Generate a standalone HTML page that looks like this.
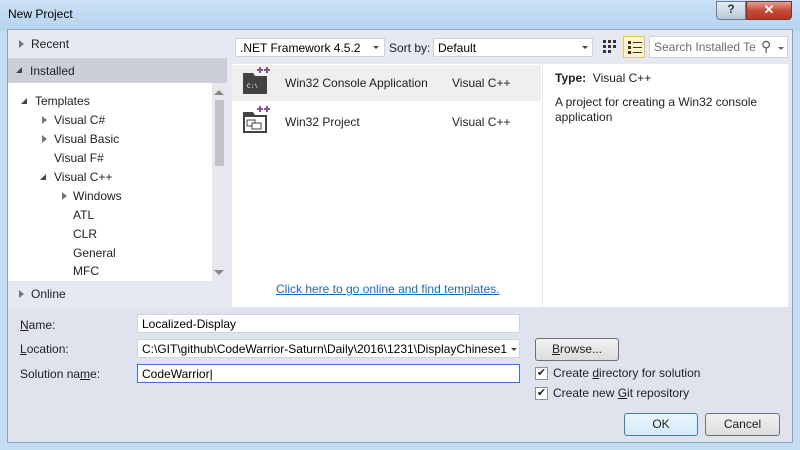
<!DOCTYPE html>
<html><head><style>
*{margin:0;padding:0;box-sizing:border-box}
body{width:800px;height:450px;overflow:hidden;background:#c4dcf2;font-family:"Liberation Sans",sans-serif;font-size:12px;color:#1e1e1e;position:relative}
.a{position:absolute}
.title{left:0;top:0;width:800px;height:30px;background:linear-gradient(#c9e0f6,#b8d4ef)}
.u{text-decoration:underline}
.tri{position:absolute;width:0;height:0}
.tr{border-left:5px solid #777;border-top:4px solid transparent;border-bottom:4px solid transparent}
.td{border-right:6px solid #444;border-top:6px solid transparent}
.inp{background:#fff;border:1px solid #d0d3dc;height:19px;padding:2px 4px;white-space:nowrap;overflow:hidden}
.btn{border:1px solid #707070;border-radius:3px;background:linear-gradient(#f2f2f2,#dcdcdc);text-align:center;line-height:20px}
.cb{width:13px;height:13px;border:1px solid #8e8f8f;background:#fff;font-size:11px;line-height:11px;text-align:center}
</style></head><body>
<div class="a title"></div>
<div class="a" style="left:8px;top:7px;font-size:12px;color:#000">New Project</div>
<div class="a" style="left:716px;top:1px;width:30px;height:19px;border:1px solid #6d7b8c;border-radius:0 0 0 4px;background:linear-gradient(#e4ecf5,#b8c8d9);text-align:center;font-size:12px;font-weight:bold;color:#333">?</div>
<div class="a" style="left:746px;top:1px;width:46px;height:19px;border:1px solid #6d3a34;border-radius:0 0 4px 0;background:linear-gradient(#e5a095,#c44a38 50%,#b83522);text-align:center;font-size:13px;font-weight:bold;color:#fff">✕</div>
<div class="a" style="left:7px;top:29px;width:786px;height:414px;background:#e6e8f2;border:1px solid #8aa3bd"></div>
<!-- left -->
<div class="a tri tr" style="left:19px;top:40px"></div>
<div class="a" style="left:31px;top:37px">Recent</div>
<div class="a" style="left:8px;top:58px;width:219px;height:25px;background:#ccced8"></div>
<div class="a tri td" style="left:16px;top:67px"></div>
<div class="a" style="left:30px;top:64px">Installed</div>
<div class="a" style="left:8px;top:83px;width:219px;height:198px;background:#fff"></div>
<div class="a" style="left:212px;top:83px;width:15px;height:198px;background:#e8e8ec"></div>
<div class="a" style="left:215px;top:100px;width:9px;height:66px;background:#c2c3c9"></div>
<div class="a tri" style="left:214px;top:90px;border-bottom:5px solid #888;border-left:5px solid transparent;border-right:5px solid transparent"></div>
<div class="a tri" style="left:214px;top:270px;border-top:5px solid #888;border-left:5px solid transparent;border-right:5px solid transparent"></div>
<div class="a tri td" style="left:21px;top:98px"></div>
<div class="a" style="left:35px;top:94px">Templates</div>
<div class="a tri tr" style="left:42px;top:116px"></div>
<div class="a" style="left:54px;top:113px">Visual C#</div>
<div class="a tri tr" style="left:42px;top:135px"></div>
<div class="a" style="left:54px;top:132px">Visual Basic</div>
<div class="a" style="left:54px;top:151px">Visual F#</div>
<div class="a tri td" style="left:40px;top:174px"></div>
<div class="a" style="left:54px;top:170px">Visual C++</div>
<div class="a tri tr" style="left:62px;top:192px"></div>
<div class="a" style="left:73px;top:189px">Windows</div>
<div class="a" style="left:73px;top:208px">ATL</div>
<div class="a" style="left:73px;top:227px">CLR</div>
<div class="a" style="left:73px;top:246px">General</div>
<div class="a" style="left:73px;top:264px;height:11px;overflow:hidden">MFC</div>
<div class="a tri tr" style="left:19px;top:290px"></div>
<div class="a" style="left:31px;top:287px">Online</div>
<!-- toolbar -->
<div class="a inp" style="left:235px;top:38px;width:150px;color:#000">.NET Framework 4.5.2</div>
<div class="a tri" style="left:373px;top:46px;border-top:3px solid #444;border-left:3px solid transparent;border-right:3px solid transparent"></div>
<div class="a" style="left:389px;top:41px">Sort by:</div>
<div class="a inp" style="left:433px;top:38px;width:160px;color:#000">Default</div>
<div class="a tri" style="left:582px;top:46px;border-top:3px solid #444;border-left:3px solid transparent;border-right:3px solid transparent"></div>
<svg class="a" style="left:602px;top:39px" width="16" height="16"><g fill="#333"><rect x="1" y="1" width="3" height="3"/><rect x="6" y="1" width="3" height="3"/><rect x="11" y="1" width="3" height="3"/><rect x="1" y="6" width="3" height="3"/><rect x="6" y="6" width="3" height="3"/><rect x="11" y="6" width="3" height="3"/><rect x="1" y="11" width="3" height="3"/><rect x="6" y="11" width="3" height="3"/></g></svg>
<div class="a" style="left:623px;top:36px;width:22px;height:22px;background:#fff4cc;border:1px solid #e5c365"></div>
<svg class="a" style="left:627px;top:40px" width="16" height="16"><g fill="#333"><rect x="1" y="1" width="3" height="3"/><rect x="6" y="2" width="9" height="1"/><rect x="1" y="6" width="3" height="3"/><rect x="6" y="7" width="9" height="1"/><rect x="1" y="11" width="3" height="3"/><rect x="6" y="12" width="9" height="1"/></g></svg>
<div class="a inp" style="left:649px;top:36px;width:139px;height:22px;color:#6d6d6d;padding-top:3px">Search Installed Te</div>
<div class="a" style="left:761px;top:38px;font-size:14px;color:#555">⚲</div>
<div class="a tri" style="left:778px;top:47px;border-top:3px solid #666;border-left:3px solid transparent;border-right:3px solid transparent"></div>
<!-- list -->
<div class="a" style="left:232px;top:64px;width:310px;height:243px;background:#fff"></div>
<div class="a" style="left:232px;top:65px;width:309px;height:36px;background:#efefef"></div>
<svg class="a" style="left:240px;top:66px" width="32" height="30"><path d="M3 7h10l2 3h12v18H3z" fill="#424242"/><text x="7" y="22" fill="#fff" font-size="6" font-family="Liberation Mono">C:\</text><g stroke="#8c4fa0" stroke-width="2"><path d="M20 1v6M17 4h6M27 1v6M24 4h6"/></g></svg>
<div class="a" style="left:285px;top:76px">Win32 Console Application</div>
<div class="a" style="left:452px;top:76px">Visual C++</div>
<svg class="a" style="left:240px;top:105px" width="32" height="30"><path d="M3 7h10l2 3h12v18H3z" fill="#424242"/><rect x="5" y="12" width="20" height="14" fill="#fff"/><rect x="7" y="15" width="8" height="6" fill="none" stroke="#424242"/><rect x="12" y="18" width="9" height="6" fill="#fff" stroke="#424242"/><g stroke="#8c4fa0" stroke-width="2"><path d="M20 1v6M17 4h6M27 1v6M24 4h6"/></g></svg>
<div class="a" style="left:285px;top:115px">Win32 Project</div>
<div class="a" style="left:452px;top:115px">Visual C++</div>
<div class="a u" style="left:276px;top:282px;color:#0e6fc5">Click here to go online and find templates.</div>
<!-- right -->
<div class="a" style="left:543px;top:64px;width:245px;height:243px;background:#fff"></div>
<div class="a" style="left:555px;top:71px"><b>Type:</b>&nbsp; Visual C++</div>
<div class="a" style="left:555px;top:95px;line-height:15px;width:230px">A project for creating a Win32 console application</div>
<!-- bottom -->
<div class="a" style="left:8px;top:307px;width:784px;height:135px;background:#dfe3ed"></div>
<div class="a" style="left:20px;top:318px"><span class="u">N</span>ame:</div>
<div class="a inp" style="left:137px;top:314px;width:383px;color:#000">Localized-Display</div>
<div class="a" style="left:20px;top:342px"><span class="u">L</span>ocation:</div>
<div class="a inp" style="left:137px;top:339px;width:383px;color:#000;padding-right:12px">C:\GIT\github\CodeWarrior-Saturn\Daily\2016\1231\DisplayChinese1</div>
<div class="a tri" style="left:511px;top:348px;border-top:3px solid #444;border-left:3px solid transparent;border-right:3px solid transparent"></div>
<div class="a" style="left:20px;top:367px">Solution na<span class="u">m</span>e:</div>
<div class="a inp" style="left:137px;top:364px;width:383px;border-color:#3a6fd8;color:#000">CodeWarrior|</div>
<div class="a btn" style="left:535px;top:338px;width:84px;height:23px"><span class="u">B</span>rowse...</div>
<div class="a cb" style="left:535px;top:367px">✔</div>
<div class="a" style="left:553px;top:366px">Create <span class="u">d</span>irectory for solution</div>
<div class="a cb" style="left:535px;top:387px">✔</div>
<div class="a" style="left:553px;top:386px">Create new <span class="u">G</span>it repository</div>
<div class="a btn" style="left:624px;top:413px;width:74px;height:23px;border-color:#3c7fb1;background:linear-gradient(#eaf6fd,#d3ebf9)">OK</div>
<div class="a btn" style="left:705px;top:413px;width:75px;height:23px">Cancel</div>
</body></html>
